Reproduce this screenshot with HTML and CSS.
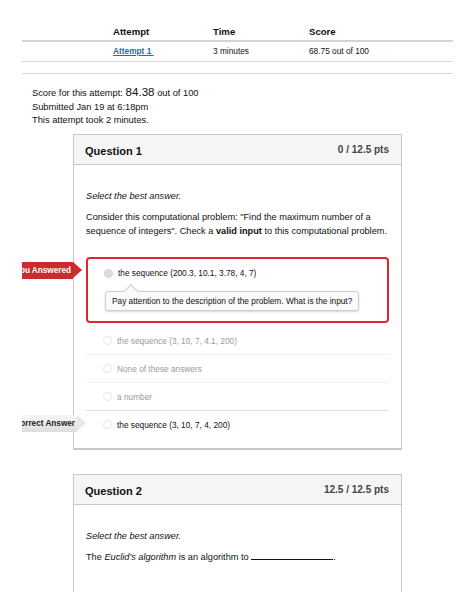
FILE: index.html
```html
<!DOCTYPE html>
<html lang="en">
<head>
  <meta charset="UTF-8" />
  <meta name="viewport" content="width=device-width, initial-scale=1.0"/>
  <title>Quiz Results</title>
  <link rel="stylesheet" href="styles.css">
</head>
<body>

  <div class="page">
    <table class="attempts">
      <thead>
        <tr><th class="gap"></th><th class="c-attempt">Attempt</th><th class="c-time">Time</th><th>Score</th></tr>
      </thead>
      <tbody>
        <tr><td></td><td><a href="#">Attempt 1&nbsp;</a></td><td>3 minutes</td><td>68.75 out of 100</td></tr>
      </tbody>
    </table>

    <div class="summary">
      <p>Score for this attempt: <span class="big">84.38</span> out of 100</p>
      <p>Submitted Jan 19 at 6:18pm</p>
      <p>This attempt took 2 minutes.</p>
    </div>

    <section class="question">
      <header class="q-head">
        <h2>Question 1</h2>
        <span class="pts">0 / 12.5 pts</span>
      </header>
      <div class="q-body">
        <p class="hint">Select the best answer.</p>
        <p>Consider this computational problem: "Find the maximum number of a sequence of integers". Check a <strong>valid input</strong> to this computational problem.</p>

        <ul class="answers">
          <li class="answer chosen">
            <span class="tag tag-you">You Answered</span>
            <div class="choice"><span class="radio checked"></span>the sequence (200.3, 10.1, 3.78, 4, 7)</div>
            <div class="comment">Pay attention to the description of the problem. What is the input?</div>
          </li>
          <li class="answer muted first">
            <div class="choice"><span class="radio"></span>the sequence (3, 10, 7, 4.1, 200)</div>
          </li>
          <li class="answer muted">
            <div class="choice"><span class="radio"></span>None of these answers</div>
          </li>
          <li class="answer muted">
            <div class="choice"><span class="radio"></span>a number</div>
          </li>
          <li class="answer correct">
            <span class="tag tag-correct">Correct Answer</span>
            <div class="choice"><span class="radio"></span>the sequence (3, 10, 7, 4, 200)</div>
          </li>
        </ul>
      </div>
    </section>

    <section class="question">
      <header class="q-head">
        <h2>Question 2</h2>
        <span class="pts">12.5 / 12.5 pts</span>
      </header>
      <div class="q-body tall">
        <p class="hint">Select the best answer.</p>
        <p>The <em>Euclid's algorithm</em> is an algorithm to <span class="blank"></span>.</p>
      </div>
    </section>
  </div>

</body>
</html>
```

FILE: styles.css
```css
body {
  margin: 0;
  padding: 0;
  font-family: "Liberation Sans", Arial, sans-serif;
  background-color: #fff;
  color: #111;
}

.page {
  margin-left: 22px;
  width: 431px;
  height: 592px;
  padding-top: 26px;
  box-sizing: border-box;
  overflow: hidden;
}

/* attempts table */

.attempts {
  width: 100%;
  border-collapse: collapse;
  font-size: 8.3px;
  text-align: left;
}

.attempts th {
  font-weight: bold;
  font-size: 9.6px;
  line-height: 12px;
  padding: 0 0 2px;
  border-bottom: 2px solid #d4d4d4;
}

.attempts td {
  padding: 4px 0 5px;
  line-height: 10px;
  border-bottom: 1px solid #d8d8d8;
}

.attempts .gap { width: 91px; }
.attempts .c-attempt { width: 100px; }
.attempts .c-time { width: 96px; }

.attempts a {
  color: #1a6fae;
  font-weight: bold;
}

/* score summary */

.summary {
  margin-top: 11px;
  border-top: 1px solid #d8d8d8;
  padding: 10px 0 0 10px;
  font-size: 9.3px;
}

.summary p {
  margin: 0;
  line-height: 13px;
}

.summary p:first-child {
  line-height: 16px;
}

.summary .big {
  font-size: 11.6px;
}

/* question card */

.question {
  margin: 7px 0 0 51px;
  width: 329px;
  box-sizing: border-box;
  border: 1px solid #c8c8c8;
  border-bottom-width: 2px;
}

.question + .question {
  margin-top: 24px;
}

.q-head {
  display: flex;
  justify-content: space-between;
  align-items: center;
  height: 29px;
  padding: 0 12px 0 11px;
  background: #f5f5f5;
  border-bottom: 1px solid #c8c8c8;
}

.q-head h2 {
  margin: 2px 0 0;
  font-size: 11px;
  font-weight: bold;
}

.pts {
  font-size: 10px;
  font-weight: bold;
  color: #444;
}

.q-body {
  padding: 24px 12px 10px;
  font-size: 9.2px;
}

.q-body.tall {
  min-height: 140px;
}

.q-body p {
  margin: 0 0 7px;
  line-height: 14px;
}

.q-body .hint {
  font-style: italic;
}

.blank {
  display: inline-block;
  width: 82px;
  border-bottom: 1px solid #111;
}

/* answers */

.answers {
  list-style: none;
  margin: 19px 0 0;
  padding: 0;
  font-size: 8.3px;
}

.answer {
  position: relative;
  padding: 0 0 0 17px;
  border-top: 1px solid #f0f0f0;
}

.answer .choice {
  display: flex;
  align-items: center;
  height: 27px;
}

.answer.chosen {
  border: 2px solid #e0262c;
  border-radius: 4px;
  padding: 6px 0 10px 16px;
}

.answer.chosen .choice {
  height: 16px;
}

.answer.first {
  border-top: none;
  padding-top: 4px;
}

.answer.muted {
  color: #9a9a9a;
}

.answer.correct {
  border-top-color: #dcdcdc;
}

.radio {
  width: 7px;
  height: 7px;
  border-radius: 50%;
  border: 1px solid #e4e4e4;
  margin-right: 5px;
  flex: none;
}

.radio.checked {
  background: #ddd;
  border-color: #d4d4d4;
}

.comment {
  position: relative;
  display: inline-block;
  margin: 10px 0 0 1px;
  padding: 4px 6px;
  border: 1px solid #ccc;
  border-radius: 3px;
  background: #fafafa;
  box-shadow: 0 1px 2px rgba(0, 0, 0, 0.15);
  color: #111;
  white-space: nowrap;
}

.comment::before {
  content: "";
  position: absolute;
  top: -6px;
  left: 20px;
  width: 9px;
  height: 9px;
  background: #fafafa;
  border-left: 1px solid #ccc;
  border-top: 1px solid #ccc;
  transform: rotate(45deg);
}

/* side labels */

.tag {
  position: absolute;
  top: 3px;
  right: calc(100% + 15px);
  height: 17px;
  line-height: 17px;
  padding: 0 2px 0 10px;
  font-size: 8.2px;
  font-weight: bold;
  white-space: nowrap;
}

.tag::after {
  content: "";
  position: absolute;
  top: 0;
  right: -9px;
  border-top: 8.5px solid transparent;
  border-bottom: 8.5px solid transparent;
  border-left: 9px solid;
}

.tag-you {
  background: #cc2a2d;
  color: #fff;
}

.tag-you::after {
  border-left-color: #cc2a2d;
}

.tag-correct {
  top: 4px;
  right: calc(100% + 9px);
  background: linear-gradient(#f7f7f7, #dedede);
  color: #222;
}

.tag-correct::after {
  border-left-color: #e8e8e8;
}
```
